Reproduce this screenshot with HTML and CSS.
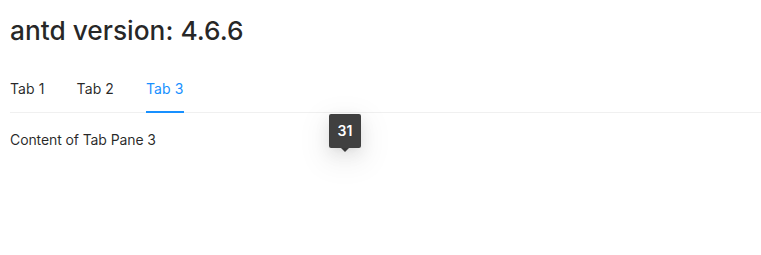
FILE: index.html
```html
<!DOCTYPE html>
<html>
<head>
<meta charset="utf-8">
<link rel="stylesheet" href="styles.css">
</head>
<body>
<div class="page">
  <h1 class="title">antd version: 4.6.6</h1>
  <div class="tabs">
    <div class="tabs-nav">
      <div class="tab">Tab 1</div>
      <div class="tab">Tab 2</div>
      <div class="tab tab-active">Tab 3</div>
    </div>
    <div class="tab-pane">Content of Tab Pane 3</div>
  </div>
</div>
<div class="tooltip">
  <div class="tooltip-inner">31</div>
  <div class="tooltip-arrow"></div>
</div>
</body>
</html>
```

FILE: styles.css
```css
html, body {
  margin: 0;
  padding: 0;
  background: #fff;
}
body {
  font-family: Inter, "Noto Sans", "Liberation Sans", sans-serif;
  color: rgba(0, 0, 0, 0.85);
  font-size: 14px;
  line-height: 22px;
}
.page {
  padding: 14px 0 0 10px;
}
.title {
  margin: 0 0 20px;
  font-size: 26.3px;
  line-height: 34px;
  font-weight: 500;
}
.tabs-nav {
  display: flex;
  border-bottom: 1px solid #f0f0f0;
  margin-bottom: 16px;
  margin-top: -2px;
}
.tab {
  padding: 12px 0;
  margin-right: 32px;
  position: relative;
  letter-spacing: 0.1px;
}
.tab-active {
  color: #1890ff;
}
.tab-active::after {
  content: "";
  position: absolute;
  left: 0;
  right: 0;
  bottom: -1px;
  height: 2px;
  background: #1890ff;
}
.tab-pane {
  letter-spacing: -0.1px;
}
.tooltip {
  position: absolute;
  left: 329px;
  top: 114px;
}
.tooltip-inner {
  min-width: 32px;
  min-height: 32px;
  box-sizing: border-box;
  padding: 6px 8px;
  color: #fff;
  font-weight: 600;
  text-align: center;
  background: rgba(0, 0, 0, 0.75);
  border-radius: 2px;
  box-shadow: 0 3px 6px -4px rgba(0,0,0,0.12), 0 6px 16px 0 rgba(0,0,0,0.08), 0 9px 28px 8px rgba(0,0,0,0.05);
}
.tooltip-arrow {
  width: 0;
  height: 0;
  margin: 0 auto;
  border-left: 4px solid transparent;
  border-right: 4px solid transparent;
  border-top: 4px solid rgba(0, 0, 0, 0.75);
}
```
